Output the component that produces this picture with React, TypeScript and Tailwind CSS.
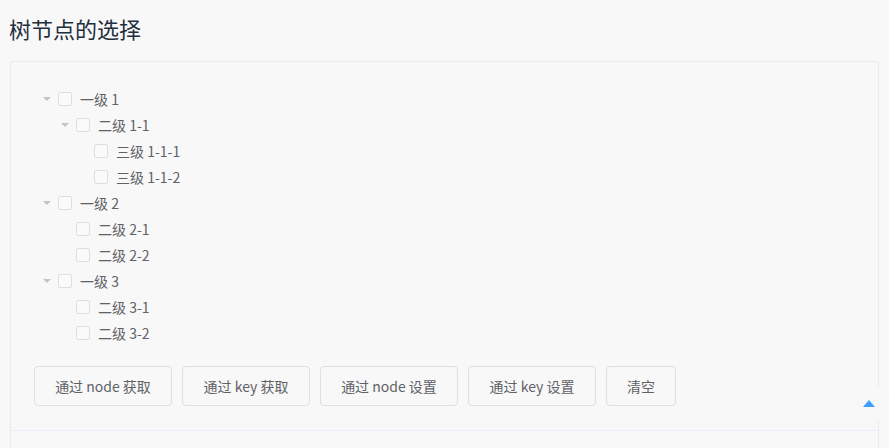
import React from "react";

type Node = { label: string; level: number; expandable: boolean };

const nodes: Node[] = [
  { label: "一级 1", level: 1, expandable: true },
  { label: "二级 1-1", level: 2, expandable: true },
  { label: "三级 1-1-1", level: 3, expandable: false },
  { label: "三级 1-1-2", level: 3, expandable: false },
  { label: "一级 2", level: 1, expandable: true },
  { label: "二级 2-1", level: 2, expandable: false },
  { label: "二级 2-2", level: 2, expandable: false },
  { label: "一级 3", level: 1, expandable: true },
  { label: "二级 3-1", level: 2, expandable: false },
  { label: "二级 3-2", level: 2, expandable: false },
];

const indentClass: Record<number, string> = {
  1: "pl-0",
  2: "pl-[18px]",
  3: "pl-[36px]",
};

const buttons = [
  { label: "通过 node 获取", w: "w-[138px]" },
  { label: "通过 key 获取", w: "w-[128px]" },
  { label: "通过 node 设置", w: "w-[138px]" },
  { label: "通过 key 设置", w: "w-[128px]" },
  { label: "清空", w: "w-[70px]" },
];

export default function App() {
  return (
    <div
      className="relative h-[448px] w-[889px] overflow-hidden bg-[#f8f8f9]"
      style={{ fontFamily: '"Noto Sans CJK SC", "Liberation Sans", sans-serif' }}
    >
      <h2 className="pl-[9px] pt-[12px] text-[22px] leading-[32px] font-normal text-[#1f2f3d]">
        树节点的选择
      </h2>
      <div className="ml-[10px] mt-[17px] w-[869px] rounded-[3px] border border-[#ebebeb]">
        <div className="px-[23px] pt-[24px] pb-[24px]">
          <div className="flex flex-col">
            {nodes.map((n, i) => (
              <div key={i} className={`flex h-[26px] items-center ${indentClass[n.level]}`}>
                <div className="flex w-[24px] justify-center pl-[1px]">
                  {n.expandable ? (
                    <svg width="8" height="4" viewBox="0 0 8 4">
                      <path d="M0 0 H8 L4 4 Z" fill="#c0c4cc" />
                    </svg>
                  ) : (
                    <span className="block h-[4px] w-[8px]" />
                  )}
                </div>
                <span className="block h-[14px] w-[14px] rounded-[2px] border border-[#dcdfe6] bg-[#fafafa]" />
                <span className="ml-[8px] text-[14px] leading-none text-[#606266]">{n.label}</span>
              </div>
            ))}
          </div>
          <div className="mt-[20px] flex gap-[10px]">
            {buttons.map((b) => (
              <button
                key={b.label}
                className={`h-[40px] ${b.w} rounded-[4px] border border-[#dcdfe6] bg-[#f8f8f9] text-center text-[14px] leading-none whitespace-nowrap text-[#606266]`}
              >
                {b.label}
              </button>
            ))}
          </div>
        </div>
        <div className="h-[40px] border-t border-[#eaeefb]" />
      </div>
      <div className="absolute left-[849px] top-[383px] flex h-[40px] w-[40px] items-center justify-center rounded-full bg-[#f8f8f9] shadow-[0_0_4px_rgba(0,0,0,0.025)]">
        <svg width="12" height="7" viewBox="0 0 12 7">
          <path d="M6 0 L12 7 H0 Z" fill="#409eff" />
        </svg>
      </div>
    </div>
  );
}
